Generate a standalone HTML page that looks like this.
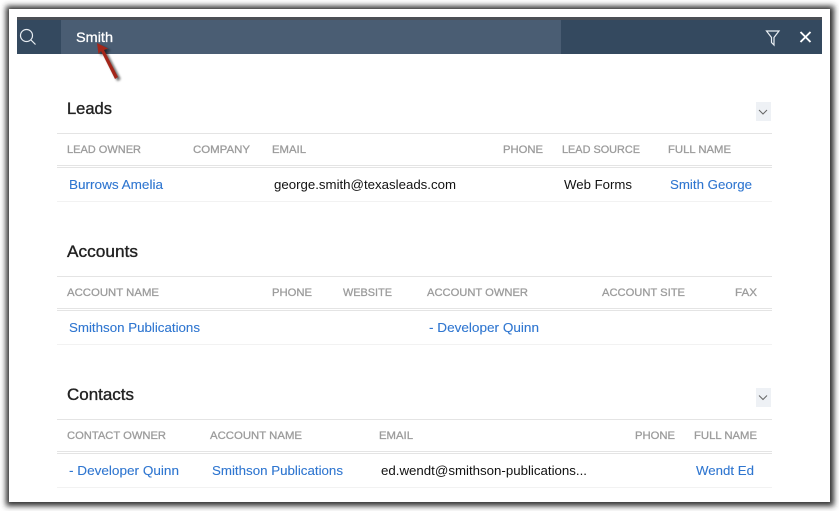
<!DOCTYPE html>
<html><head><meta charset="utf-8">
<style>
html,body{margin:0;padding:0;background:#fff;width:839px;height:511px;overflow:hidden}
svg{display:block}
text{font-family:"Liberation Sans",sans-serif}
.t{font-size:17px;fill:#222;stroke:#222;stroke-width:.35px}
.h{font-size:11px;fill:#9c9c9c;stroke:#9c9c9c;stroke-width:.3px}
.l{font-size:13px;fill:#2f76d0;stroke:#2f76d0;stroke-width:.1px}
.b{font-size:13px;fill:#111}
</style></head><body>
<svg width="839" height="511" viewBox="0 0 839 511" xmlns="http://www.w3.org/2000/svg">
<defs>
<filter id="s" x="-5%" y="-5%" width="110%" height="110%"><feGaussianBlur stdDeviation="2.8"/></filter>
<filter id="a" x="-50%" y="-50%" width="200%" height="200%"><feGaussianBlur stdDeviation="1.3"/></filter>
</defs>
<rect width="839" height="511" fill="#fff"/>
<rect x="6" y="6" width="828" height="500" fill="#333" filter="url(#s)"/>
<rect x="9" y="9" width="821" height="493" fill="#fff"/>
<rect x="17" y="17" width="805" height="37" fill="#34495f"/>
<rect x="17" y="17" width="805" height="3" fill="#4b4f55"/>
<rect x="61" y="20" width="500" height="34" fill="#4a5d73"/>
<g fill="none" stroke="#e8edf2" stroke-width="1.2">
<circle cx="26.500" cy="35.500" r="6"/><path d="M31 40l4.500 4.500"/>
<path d="M766.500 31h12.500l-5 6.500v7.500l-2.500-2.500v-5z"/>
</g>
<path d="M800.500 32l10 10M810.500 32l-10 10" stroke="#fff" stroke-width="1.900" fill="none"/>
<text x="76" y="42" font-size="14" fill="#fff" stroke="#fff" stroke-width=".3" textLength="37" lengthAdjust="spacingAndGlyphs">Smith</text>

<g filter="url(#a)" opacity=".7" transform="translate(2.500,2)"><path d="M97 43l11 5.500-4 1.500 14 27-3 2-14-28-2.500 3z" fill="#111"/></g>
<path d="M97 43l11 5.500-4 1.500 14 27-3 2-14-28-2.500 3z" fill="#a3261a"/>

<!-- Leads -->
<text class="t" x="67" y="114" textLength="45" lengthAdjust="spacingAndGlyphs">Leads</text>
<rect x="756" y="102" width="15" height="19" fill="#eef1f5"/>
<path d="M759 110l4 4 4-4" fill="none" stroke="#666" stroke-width="1"/>
<rect x="57" y="133" width="715" height="1" fill="#e4e4e4"/>
<rect x="57" y="165" width="715" height="1" fill="#e4e4e4"/>
<rect x="57" y="167" width="715" height="1" fill="#e4e4e4"/>
<rect x="57" y="201" width="715" height="1" fill="#f2f2f2"/>
<text class="h" x="67" y="153" textLength="74" lengthAdjust="spacingAndGlyphs">LEAD OWNER</text>
<text class="h" x="193" y="153" textLength="57" lengthAdjust="spacingAndGlyphs">COMPANY</text>
<text class="h" x="272" y="153" textLength="34" lengthAdjust="spacingAndGlyphs">EMAIL</text>
<text class="h" x="503" y="153" textLength="40" lengthAdjust="spacingAndGlyphs">PHONE</text>
<text class="h" x="562" y="153" textLength="78" lengthAdjust="spacingAndGlyphs">LEAD SOURCE</text>
<text class="h" x="668" y="153" textLength="63" lengthAdjust="spacingAndGlyphs">FULL NAME</text>
<text class="l" x="69" y="189" textLength="94" lengthAdjust="spacingAndGlyphs">Burrows Amelia</text>
<text class="b" x="274" y="189" textLength="182" lengthAdjust="spacingAndGlyphs">george.smith@texasleads.com</text>
<text class="b" x="564" y="189" textLength="68" lengthAdjust="spacingAndGlyphs">Web Forms</text>
<text class="l" x="670" y="189" textLength="82" lengthAdjust="spacingAndGlyphs">Smith George</text>

<!-- Accounts -->
<text class="t" x="67" y="257" textLength="71" lengthAdjust="spacingAndGlyphs">Accounts</text>
<rect x="57" y="276" width="715" height="1" fill="#e4e4e4"/>
<rect x="57" y="308" width="715" height="1" fill="#e4e4e4"/>
<rect x="57" y="310" width="715" height="1" fill="#e4e4e4"/>
<rect x="57" y="344" width="715" height="1" fill="#f2f2f2"/>
<text class="h" x="67" y="296" textLength="92" lengthAdjust="spacingAndGlyphs">ACCOUNT NAME</text>
<text class="h" x="272" y="296" textLength="40" lengthAdjust="spacingAndGlyphs">PHONE</text>
<text class="h" x="343" y="296" textLength="49" lengthAdjust="spacingAndGlyphs">WEBSITE</text>
<text class="h" x="427" y="296" textLength="101" lengthAdjust="spacingAndGlyphs">ACCOUNT OWNER</text>
<text class="h" x="602" y="296" textLength="83" lengthAdjust="spacingAndGlyphs">ACCOUNT SITE</text>
<text class="h" x="735" y="296" textLength="22" lengthAdjust="spacingAndGlyphs">FAX</text>
<text class="l" x="69" y="332" textLength="131" lengthAdjust="spacingAndGlyphs">Smithson Publications</text>
<text class="l" x="429" y="332" textLength="110" lengthAdjust="spacingAndGlyphs">- Developer Quinn</text>

<!-- Contacts -->
<text class="t" x="67" y="400" textLength="67" lengthAdjust="spacingAndGlyphs">Contacts</text>
<rect x="756" y="388" width="15" height="19" fill="#eef1f5"/>
<path d="M759 395.500l4 4 4-4" fill="none" stroke="#666" stroke-width="1"/>
<rect x="57" y="419" width="715" height="1" fill="#e4e4e4"/>
<rect x="57" y="451" width="715" height="1" fill="#e4e4e4"/>
<rect x="57" y="453" width="715" height="1" fill="#e4e4e4"/>
<rect x="57" y="487" width="715" height="1" fill="#f2f2f2"/>
<text class="h" x="67" y="439" textLength="99" lengthAdjust="spacingAndGlyphs">CONTACT OWNER</text>
<text class="h" x="210" y="439" textLength="92" lengthAdjust="spacingAndGlyphs">ACCOUNT NAME</text>
<text class="h" x="379" y="439" textLength="34" lengthAdjust="spacingAndGlyphs">EMAIL</text>
<text class="h" x="635" y="439" textLength="40" lengthAdjust="spacingAndGlyphs">PHONE</text>
<text class="h" x="694" y="439" textLength="63" lengthAdjust="spacingAndGlyphs">FULL NAME</text>
<text class="l" x="69" y="475" textLength="110" lengthAdjust="spacingAndGlyphs">- Developer Quinn</text>
<text class="l" x="212" y="475" textLength="131" lengthAdjust="spacingAndGlyphs">Smithson Publications</text>
<text class="b" x="381" y="475" textLength="206" lengthAdjust="spacingAndGlyphs">ed.wendt@smithson-publications...</text>
<text class="l" x="696" y="475" textLength="58" lengthAdjust="spacingAndGlyphs">Wendt Ed</text>
</svg>
</body></html>
